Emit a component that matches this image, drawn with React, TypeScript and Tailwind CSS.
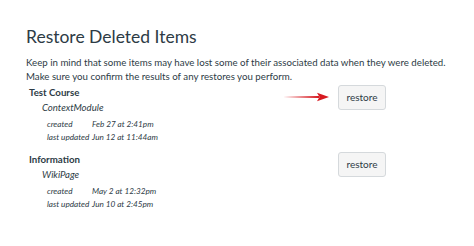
const items = [
  {
    name: 'Test Course',
    type: 'ContextModule',
    created: 'Feb 27 at 2:41pm',
    updated: 'Jun 12 at 11:44am',
    arrow: true,
  },
  {
    name: 'Information',
    type: 'WikiPage',
    created: 'May 2 at 12:32pm',
    updated: 'Jun 10 at 2:45pm',
    arrow: false,
  },
];

// red annotation arrow pointing at the first restore button
const Arrow = () => (
  <svg width="46" height="10" viewBox="0 0 46 10" className="mr-[9px] mt-[7px]">
    <path d="M0 5 L36 3.9 L36 6.1 Z" fill="#d71920" />
    <path d="M34 0.8 L46 5 L34 9.2 L36.5 5 Z" fill="#d71920" />
  </svg>
);

export default function App() {
  return (
    <div className="w-[474px] h-[246px] bg-white pl-[26px] pt-[26px] text-[#2d3b45] font-['Lato',sans-serif]">
      <h1 className="text-[17.5px] leading-[21px] text-[#2d3b45]">Restore Deleted Items</h1>
      <p className="mt-[8px] text-[9.7px] leading-[14px] whitespace-nowrap">
        Keep in mind that some items may have lost some of their associated data when they were deleted.
        <br />
        Make sure you confirm the results of any restores you perform.
      </p>
      <div className="w-[360px] mt-[2px] flex flex-col gap-[8px]">
        {items.map((item) => (
          <div key={item.name} className="flex justify-between items-start">
            <div className="pl-[3px]">
              <div className="font-bold text-[9.7px] leading-[15px]">{item.name}</div>
              <div className="italic text-[9.6px] leading-[15px] pl-[13px]">{item.type}</div>
              <div className="grid grid-cols-[45px_auto] italic text-[8.2px] leading-[13px] pl-[18px] mt-[3px]">
                <span className="whitespace-nowrap">created</span>
                <span className="whitespace-nowrap">{item.created}</span>
                <span className="whitespace-nowrap">last updated</span>
                <span className="whitespace-nowrap">{item.updated}</span>
              </div>
            </div>
            <div className="flex items-start">
              {item.arrow && <Arrow />}
              <button className="w-[48px] h-[25px] bg-[#f5f5f5] border border-[#d5d9dc] rounded-[3px] text-[10px] text-[#2d3b45]">
                restore
              </button>
            </div>
          </div>
        ))}
      </div>
    </div>
  );
}
